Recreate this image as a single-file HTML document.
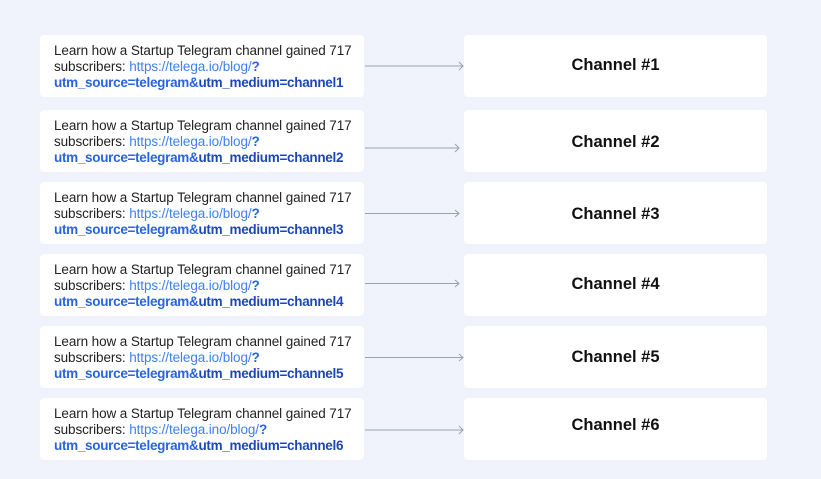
<!DOCTYPE html>
<html><head><meta charset="utf-8">
<style>
*{margin:0;padding:0;box-sizing:border-box}
body{width:821px;height:479px;background:#f0f3fc;position:relative;overflow:hidden;font-family:"Liberation Sans",sans-serif}
.l{position:absolute;left:40px;width:324px;height:62px;background:#fff;border-radius:4px;padding:8px 0 0 14px;font-size:13.5px;line-height:16px;color:#222;letter-spacing:-0.1px;white-space:nowrap}
.r{position:absolute;left:464px;width:303px;height:62px;background:#fff;border-radius:4px;display:flex;align-items:center;justify-content:center;font-weight:bold;font-size:16.5px;color:#111}
.a{color:#3f7fef}
.b{color:#2a63e0;font-weight:bold;letter-spacing:-0.3px}
.c{color:#1d47b8;font-weight:bold;letter-spacing:-0.3px}
svg{position:absolute;left:0;top:0}
</style></head><body>
<svg width="821" height="479">
<g stroke="#9aa0ad" stroke-width="1" fill="none">
<path d="M365 66H463M459 62l4 4-4 4"/>
<path d="M365 148H459M455 144l4 4-4 4"/>
<path d="M365 213.5H459M455 210l4 3.5-4 3.5"/>
<path d="M365 283.5H459M455 280l4 3.5-4 3.5"/>
<path d="M365 357.5H463M459 354l4 3.5-4 3.5"/>
<path d="M365 430H463M459 426l4 4-4 4"/>
</g></svg>
<div class="l" style="top:35px">Learn how a Startup Telegram channel gained 717<br>subscribers: <span class="a">https://telega.io/blog/</span><span class="b">?</span><br><span class="b">utm_source=telegram&amp;</span><span class="c">utm_medium=channel1</span></div>
<div class="r" style="top:35px;padding-bottom:2px">Channel #1</div>
<div class="l" style="top:110px">Learn how a Startup Telegram channel gained 717<br>subscribers: <span class="a">https://telega.io/blog/</span><span class="b">?</span><br><span class="b">utm_source=telegram&amp;</span><span class="c">utm_medium=channel2</span></div>
<div class="r" style="top:110px;padding-top:3px">Channel #2</div>
<div class="l" style="top:182px">Learn how a Startup Telegram channel gained 717<br>subscribers: <span class="a">https://telega.io/blog/</span><span class="b">?</span><br><span class="b">utm_source=telegram&amp;</span><span class="c">utm_medium=channel3</span></div>
<div class="r" style="top:182px;padding-top:3px">Channel #3</div>
<div class="l" style="top:254px">Learn how a Startup Telegram channel gained 717<br>subscribers: <span class="a">https://telega.io/blog/</span><span class="b">?</span><br><span class="b">utm_source=telegram&amp;</span><span class="c">utm_medium=channel4</span></div>
<div class="r" style="top:254px;padding-bottom:2px">Channel #4</div>
<div class="l" style="top:326px">Learn how a Startup Telegram channel gained 717<br>subscribers: <span class="a">https://telega.io/blog/</span><span class="b">?</span><br><span class="b">utm_source=telegram&amp;</span><span class="c">utm_medium=channel5</span></div>
<div class="r" style="top:326px;padding-top:1px">Channel #5</div>
<div class="l" style="top:398px">Learn how a Startup Telegram channel gained 717<br>subscribers: <span class="a">https://telega.ino/blog/</span><span class="b">?</span><br><span class="b">utm_source=telegram&amp;</span><span class="c">utm_medium=channel6</span></div>
<div class="r" style="top:398px;padding-bottom:8px">Channel #6</div>
</body></html>
